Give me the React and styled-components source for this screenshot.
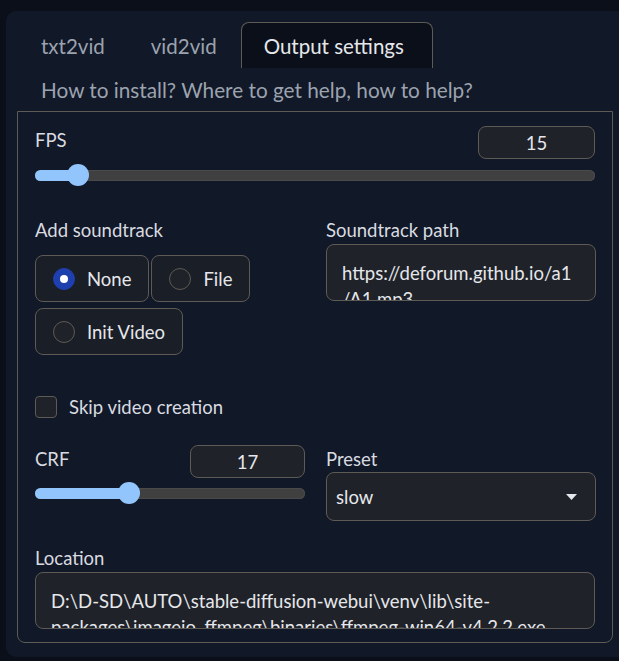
import React from "react";
import styled, { createGlobalStyle } from "styled-components";

const GlobalStyle = createGlobalStyle`
  body {
    margin: 0;
    background: #0b0f19;
    font-family: Lato, "Liberation Sans", sans-serif;
    overflow: hidden;
  }
`;

const Panel = styled.div`
  margin: 11px 0 0 6px;
  padding: 11px 6px 14px 11px;
  background: #111827;
  border-radius: 10px 0 0 10px;
`;

const TabNav = styled.div`
  display: flex;
  gap: 2px;
  padding-left: 2px;
`;

const Tab = styled.div`
  height: 46px;
  padding: ${({ $active }) => ($active ? "0 28px 0 22px" : "0 21px")};
  display: flex;
  align-items: center;
  font-size: 20.5px;
  color: ${({ $active }) => ($active ? "#e5e7eb" : "#9ca3af")};
  background: ${({ $active }) => ($active ? "#0b0f19" : "transparent")};
  border: 1px solid ${({ $active }) => ($active ? "#5e5a55" : "transparent")};
  border-bottom: none;
  border-radius: 8px 8px 0 0;
  box-sizing: border-box;
`;

const Help = styled.div`
  height: 43px;
  padding-left: 24px;
  display: flex;
  align-items: center;
  font-size: 20.75px;
  color: #9ca3af;
`;

const TabBody = styled.div`
  border: 1px solid #5e5a55;
  border-radius: 0 0 8px 8px;
  padding: 14px 17px 13px 17px;
`;

const Label = styled.div`
  font-size: 18.5px;
  line-height: 20px;
  color: #d9dbe0;
  margin-top: ${({ $top }) => $top || 0}px;
`;

const SliderHead = styled.div`
  display: flex;
  justify-content: space-between;
  align-items: flex-start;
`;

const NumberBox = styled.div`
  width: ${({ $w }) => $w}px;
  height: 33px;
  box-sizing: border-box;
  border: 1px solid #5e5a55;
  border-radius: 8px;
  background: #1f2228;
  color: #e5e7eb;
  font-size: 18.5px;
  display: flex;
  align-items: center;
  justify-content: center;
`;

const SliderWrap = styled.div`
  position: relative;
  height: 22px;
  margin-top: ${({ $top }) => $top}px;
`;

const Track = styled.div`
  position: absolute;
  left: 0;
  right: 0;
  top: 6px;
  height: 11px;
  border-radius: 6px;
  background: #404040;
  box-shadow: inset 0 0 0 1px #4a4a4a;
  overflow: hidden;
`;

const Fill = styled.div`
  height: 100%;
  background: #93c5fd;
`;

const Thumb = styled.div`
  position: absolute;
  top: 0;
  width: 22px;
  height: 22px;
  margin-left: -11px;
  border-radius: 50%;
  background: #93c5fd;
`;

const Columns = styled.div`
  display: grid;
  grid-template-columns: 270px 270px;
  column-gap: 21px;
  margin-top: ${({ $top }) => $top}px;
`;

const RadioGroup = styled.div`
  display: flex;
  flex-wrap: wrap;
  gap: 6px 2px;
  margin-top: 15px;
`;

const RadioOption = styled.div`
  height: 47px;
  box-sizing: border-box;
  padding: 0 17px;
  display: flex;
  align-items: center;
  gap: 12px;
  border: 1px solid #5e5a55;
  border-radius: 8px;
  background: #1a1e26;
  color: #e5e7eb;
  font-size: 18.5px;
`;

const RadioDot = styled.span`
  width: 22px;
  height: 22px;
  box-sizing: border-box;
  border-radius: 50%;
  border: 1px solid ${({ $on }) => ($on ? "#1e40af" : "#5e5a55")};
  background: ${({ $on }) => ($on ? "#1e40af" : "#1f2228")};
  display: flex;
  align-items: center;
  justify-content: center;
  &::after {
    content: "";
    width: 8px;
    height: 8px;
    border-radius: 50%;
    background: ${({ $on }) => ($on ? "#ffffff" : "transparent")};
  }
`;

const TextBox = styled.div`
  height: 57px;
  box-sizing: border-box;
  margin-top: 4px;
  padding: 15px 15px 0;
  border: 1px solid #5e5a55;
  border-radius: 8px;
  background: #1f2228;
  color: #e5e7eb;
  font-size: 18.5px;
  line-height: 26px;
  overflow: hidden;
  white-space: pre;
`;

const CheckRow = styled.div`
  display: flex;
  align-items: center;
  gap: 12px;
  margin-top: 41px;
  font-size: 18.5px;
  color: #d9dbe0;
`;

const CheckBox = styled.span`
  width: 22px;
  height: 22px;
  box-sizing: border-box;
  border: 1px solid #5e5a55;
  border-radius: 4px;
  background: #1f2228;
`;

const Dropdown = styled.div`
  height: 49px;
  box-sizing: border-box;
  margin-top: 3px;
  padding: 0 18px 0 9px;
  display: flex;
  align-items: center;
  justify-content: space-between;
  border: 1px solid #5e5a55;
  border-radius: 8px;
  background: #1f2228;
  color: #e5e7eb;
  font-size: 18.5px;
`;

const Block = styled.div`
  margin-top: ${({ $top }) => $top || 0}px;
`;

function Slider({ value, min, max, top }) {
  const pct = (value - min) / (max - min);
  const pos = `calc(11px + ${pct} * (100% - 22px))`;
  return (
    <SliderWrap $top={top}>
      <Track>
        <Fill style={{ width: pos }} />
      </Track>
      <Thumb style={{ left: pos }} />
    </SliderWrap>
  );
}

export default function App() {
  return (
    <>
      <GlobalStyle />
      <Panel>
        <TabNav>
          <Tab>txt2vid</Tab>
          <Tab>vid2vid</Tab>
          <Tab $active>Output settings</Tab>
        </TabNav>
        <Help>How to install? Where to get help, how to help?</Help>
        <TabBody>
          <SliderHead>
            <Label $top={4}>FPS</Label>
            <NumberBox $w={117}>15</NumberBox>
          </SliderHead>
          <Slider value={15} min={1} max={240} top={5} />

          <Columns $top={34}>
            <div>
              <Label>Add soundtrack</Label>
              <RadioGroup>
                <RadioOption>
                  <RadioDot $on />
                  None
                </RadioOption>
                <RadioOption>
                  <RadioDot />
                  File
                </RadioOption>
                <RadioOption>
                  <RadioDot />
                  Init Video
                </RadioOption>
              </RadioGroup>
            </div>
            <div>
              <Label>Soundtrack path</Label>
              <TextBox>{"https://deforum.github.io/a1\n/A1.mp3"}</TextBox>
            </div>
          </Columns>

          <CheckRow>
            <CheckBox />
            Skip video creation
          </CheckRow>

          <Columns $top={27}>
            <div>
              <SliderHead>
                <Label $top={4}>CRF</Label>
                <NumberBox $w={115}>17</NumberBox>
              </SliderHead>
              <Slider value={17} min={0} max={51} top={4} />
            </div>
            <div>
              <Label $top={4}>Preset</Label>
              <Dropdown>
                slow
                <svg width="11" height="6" viewBox="0 0 11 6">
                  <path d="M0 0h11L5.5 6z" fill="#e5e7eb" />
                </svg>
              </Dropdown>
            </div>
          </Columns>

          <Block $top={27}>
            <Label>Location</Label>
            <TextBox>
              {"D:\\D-SD\\AUTO\\stable-diffusion-webui\\venv\\lib\\site-\npackages\\imageio_ffmpeg\\binaries\\ffmpeg-win64-v4.2.2.exe"}
            </TextBox>
          </Block>
        </TabBody>
      </Panel>
    </>
  );
}
